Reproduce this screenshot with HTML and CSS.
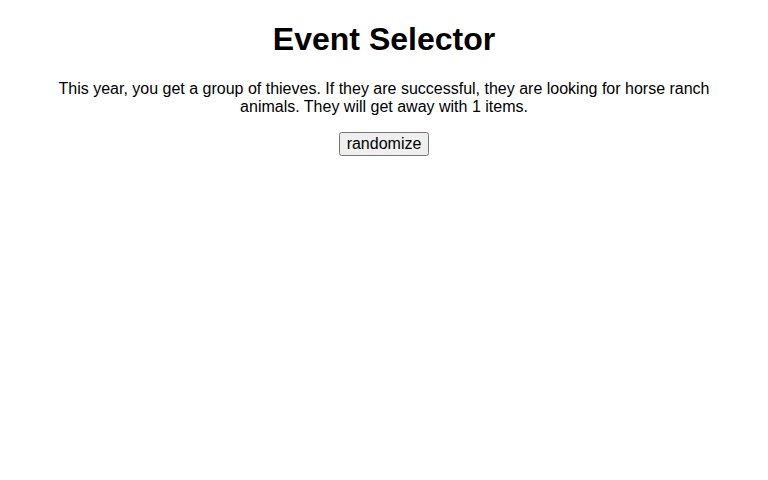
FILE: index.html
```html
<!DOCTYPE html>
<html lang="en">
<head>
    <meta charset="UTF-8">
    <meta name="viewport" content="width=device-width, initial-scale=1.0">
    <title>Event Selector</title>
    <link rel="stylesheet" href="styles.css">
</head>
<body>

    <div class="event-container">
        <h1>Event Selector</h1>
        <p id="eventText">This year, you get a group of thieves. If they are successful, they are looking for horse ranch animals. They will get away with 1 items.</p>

        <button id="randomBtn">randomize</button>
    </div>

</body>
</html>
```

FILE: styles.css
```css
body {
    font-family: "Liberation Sans", Arial, sans-serif;
    margin: 0;
}

.event-container {
    max-width: 680px;
    margin: 0 auto;
    text-align: center;
}

button {
    font-family: "Liberation Sans", Arial, sans-serif;
    font-size: 16px;
}
```
